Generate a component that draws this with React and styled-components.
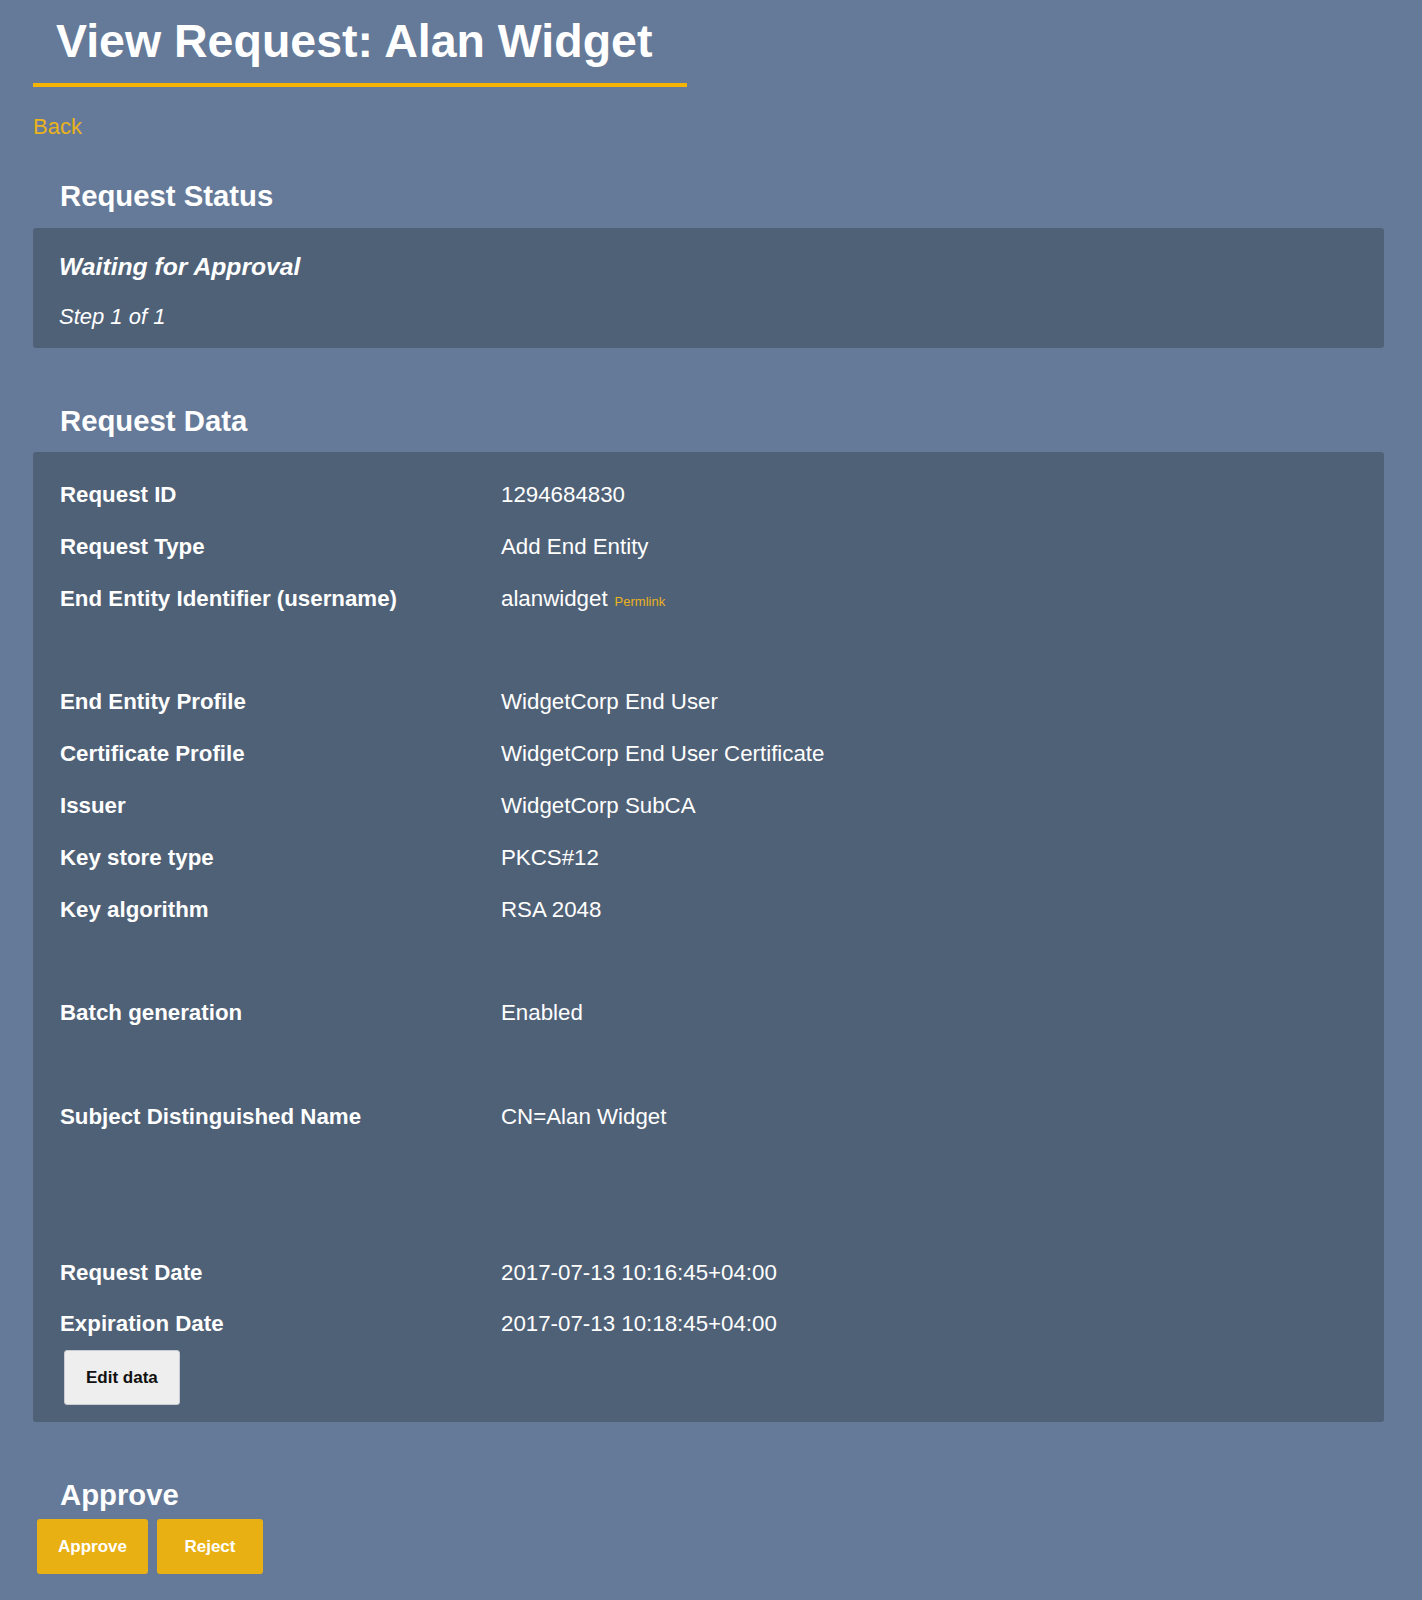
import React from "react";
import styled, { createGlobalStyle } from "styled-components";

const GlobalStyle = createGlobalStyle`
  html, body {
    margin: 0;
    padding: 0;
    background-color: #657a99;
  }
  body {
    font-family: "Liberation Sans", Arial, Helvetica, sans-serif;
    color: #ffffff;
  }
`;

const Page = styled.div`
  padding: 0 38px 30px 33px;
  min-height: 1600px;
  box-sizing: border-box;
`;

const TitleBar = styled.h1`
  width: 654px;
  box-sizing: border-box;
  margin: 0;
  padding: 13px 0 14px 23px;
  font-size: 46.5px;
  line-height: 56px;
  font-weight: bold;
  border-bottom: 4px solid #f5b400;
`;

const BackLink = styled.a`
  display: inline-block;
  margin-top: 27px;
  font-size: 22px;
  line-height: 26px;
  color: #eab21c;
  text-decoration: none;
  cursor: pointer;
`;

const SectionTitle = styled.h2`
  margin: ${(p) => p.$top}px 0 ${(p) => p.$bottom}px 27px;
  font-size: 29.3px;
  line-height: 40px;
  font-weight: bold;
`;

const Panel = styled.div`
  background-color: #4f6177;
  border-radius: 3px;
  padding: ${(p) => p.$pad};
`;

const StatusLine = styled.p`
  margin: 0;
  line-height: 50px;
  font-style: italic;
  font-size: ${(p) => (p.$strong ? "24.7px" : "22px")};
  font-weight: ${(p) => (p.$strong ? "bold" : "normal")};
`;

const DataGrid = styled.div`
  display: grid;
  grid-template-columns: 441px 1fr;
  grid-auto-rows: 51.85px;
  align-items: center;
  font-size: 22.3px;
`;

const Label = styled.div`
  font-weight: bold;
`;

const Value = styled.div``;

const Permlink = styled.a`
  font-size: 13px;
  color: #eab21c;
  margin-left: 7px;
  text-decoration: none;
`;

const Spacer = styled.div`
  grid-column: 1 / -1;
`;

const Button = styled.button`
  font-family: "Liberation Sans", Arial, Helvetica, sans-serif;
  font-size: 17px;
  font-weight: bold;
  height: 55px;
  min-width: ${(p) => (p.$light ? "auto" : "106px")};
  padding: 0 21px;
  border-radius: 3px;
  cursor: pointer;
  border: ${(p) => (p.$light ? "1px solid #c9ccd0" : "none")};
  background-color: ${(p) => (p.$light ? "#eeeeee" : "#e9b014")};
  color: ${(p) => (p.$light ? "#111111" : "#ffffff")};
`;

const EditRow = styled.div`
  padding-left: 4px;
`;

const ButtonRow = styled.div`
  display: flex;
  gap: 9px;
  padding-left: 4px;
`;

const rows = [
  ["Request ID", "1294684830"],
  ["Request Type", "Add End Entity"],
  ["End Entity Identifier (username)", "alanwidget", true],
  null,
  ["End Entity Profile", "WidgetCorp End User"],
  ["Certificate Profile", "WidgetCorp End User Certificate"],
  ["Issuer", "WidgetCorp SubCA"],
  ["Key store type", "PKCS#12"],
  ["Key algorithm", "RSA 2048"],
  null,
  ["Batch generation", "Enabled"],
  null,
  ["Subject Distinguished Name", "CN=Alan Widget"],
  null,
  null,
  ["Request Date", "2017-07-13 10:16:45+04:00"],
  ["Expiration Date", "2017-07-13 10:18:45+04:00"],
];

export default function App() {
  return (
    <Page>
      <GlobalStyle />
      <TitleBar>View Request: Alan Widget</TitleBar>
      <BackLink>Back</BackLink>

      <SectionTitle $top={36} $bottom={12}>Request Status</SectionTitle>
      <Panel $pad="14px 26px 6px">
        <StatusLine $strong>Waiting for Approval</StatusLine>
        <StatusLine>Step 1 of 1</StatusLine>
      </Panel>

      <SectionTitle $top={53} $bottom={11}>Request Data</SectionTitle>
      <Panel $pad="17px 27px 17px">
        <DataGrid>
          {rows.map((r, i) =>
            r ? (
              <React.Fragment key={i}>
                <Label>{r[0]}</Label>
                <Value>
                  {r[1]}
                  {r[2] && <Permlink>Permlink</Permlink>}
                </Value>
              </React.Fragment>
            ) : (
              <Spacer key={i} />
            )
          )}
        </DataGrid>
        <EditRow>
          <Button $light>Edit data</Button>
        </EditRow>
      </Panel>

      <SectionTitle $top={53} $bottom={4}>Approve</SectionTitle>
      <ButtonRow>
        <Button>Approve</Button>
        <Button>Reject</Button>
      </ButtonRow>
    </Page>
  );
}
